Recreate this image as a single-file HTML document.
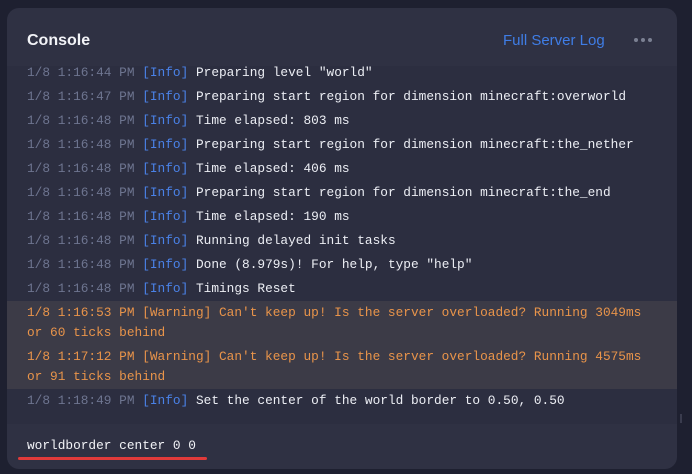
<!DOCTYPE html>
<html><head><style>
body{margin:0;width:692px;height:474px;background:#1e2030;overflow:hidden;font-family:"Liberation Sans",sans-serif}
.card{position:absolute;left:7px;top:8px;width:670px;height:461px;background:#2f3143;border-radius:12px;overflow:hidden}
.title{position:absolute;left:20px;top:24px;font-size:16px;font-weight:bold;color:#f2f3f7}
.link{position:absolute;left:496px;top:24px;font-size:15px;color:#3f7de6}
.dots{position:absolute;left:627px;top:30px}
.dots i{display:inline-block;width:4px;height:4px;border-radius:2px;background:#7b8092;margin-right:3px;vertical-align:top}
.log{position:absolute;left:0;top:58px;width:670px;height:358px;background:#2c2e40;overflow:hidden;font-family:"Liberation Mono",monospace;font-size:12.8px;color:#eceef4}
.l{padding:2px 20px;line-height:20px;white-space:pre}
.t{color:#6e7590}.i{color:#4a82e8}
.w{background:#3c3b47;color:#e9944a;padding:2px 20px;line-height:20px;white-space:pre}
.inp{position:absolute;left:20px;top:430px;font-family:"Liberation Mono",monospace;font-size:12.8px;color:#f2f3f7}
.ul{position:absolute;left:11px;top:449px;width:189px;height:3px;background:#e03a3a;border-radius:2px}
</style></head><body>
<div class="card">
<div class="title">Console</div>
<div class="link">Full Server Log</div>
<div class="dots"><i></i><i></i><i></i></div>
<div class="log">
<div style="margin-top:-5px"></div>
<div class="l"><span class="t">1/8 1:16:44 PM</span> <span class="i">[Info]</span> Preparing level "world"</div>
<div class="l"><span class="t">1/8 1:16:47 PM</span> <span class="i">[Info]</span> Preparing start region for dimension minecraft:overworld</div>
<div class="l"><span class="t">1/8 1:16:48 PM</span> <span class="i">[Info]</span> Time elapsed: 803 ms</div>
<div class="l"><span class="t">1/8 1:16:48 PM</span> <span class="i">[Info]</span> Preparing start region for dimension minecraft:the_nether</div>
<div class="l"><span class="t">1/8 1:16:48 PM</span> <span class="i">[Info]</span> Time elapsed: 406 ms</div>
<div class="l"><span class="t">1/8 1:16:48 PM</span> <span class="i">[Info]</span> Preparing start region for dimension minecraft:the_end</div>
<div class="l"><span class="t">1/8 1:16:48 PM</span> <span class="i">[Info]</span> Time elapsed: 190 ms</div>
<div class="l"><span class="t">1/8 1:16:48 PM</span> <span class="i">[Info]</span> Running delayed init tasks</div>
<div class="l"><span class="t">1/8 1:16:48 PM</span> <span class="i">[Info]</span> Done (8.979s)! For help, type "help"</div>
<div class="l"><span class="t">1/8 1:16:48 PM</span> <span class="i">[Info]</span> Timings Reset</div>
<div class="w">1/8 1:16:53 PM [Warning] Can't keep up! Is the server overloaded? Running 3049ms
or 60 ticks behind</div>
<div class="w">1/8 1:17:12 PM [Warning] Can't keep up! Is the server overloaded? Running 4575ms
or 91 ticks behind</div>
<div class="l"><span class="t">1/8 1:18:49 PM</span> <span class="i">[Info]</span> Set the center of the world border to 0.50, 0.50</div>
</div>
<div class="inp">worldborder center 0 0</div>
<div class="ul"></div>
</div>
<div style="position:absolute;left:680px;top:414px;width:2px;height:9px;background:#3a3c4e"></div>
</body></html>
